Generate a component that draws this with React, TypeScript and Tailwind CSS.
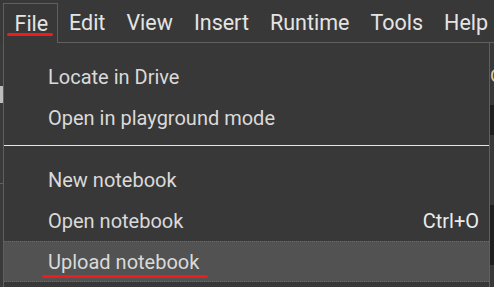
import React from "react";

const tabs = ["File", "Edit", "View", "Insert", "Runtime", "Tools", "Help"];

interface IMenuItem {
  label: string;
  shortcut?: string;
  active?: boolean;
}

const topItems: IMenuItem[] = [
  { label: "Locate in Drive" },
  { label: "Open in playground mode" },
];

const bottomItems: IMenuItem[] = [
  { label: "New notebook" },
  { label: "Open notebook", shortcut: "Ctrl+O" },
  { label: "Upload notebook", active: true },
];

const MenuRow: React.FC<IMenuItem> = ({ label, shortcut, active }) => (
  <div
    className={`relative flex h-[41px] items-center justify-between pl-[44px] pr-[10px] ${
      active
        ? "border-y border-dotted border-[#6a6a6a] bg-[#525252]"
        : "border-y border-transparent"
    }`}
  >
    <span className="text-[20px] text-[#dadada]">{label}</span>
    {shortcut && <span className="text-[20px] text-[#ececec]">{shortcut}</span>}
    {active && (
      <div className="absolute left-[38px] top-[33px] h-[3px] w-[166px] rounded-full bg-[#f01c1c]" />
    )}
  </div>
);

const App = () => {
  return (
    <div
      className="flex h-[287px] w-[494px] flex-col overflow-hidden bg-[#383838]"
      style={{ fontFamily: "Roboto, 'Liberation Sans', sans-serif" }}
    >
      {/* menu bar */}
      <div className="flex h-[43px] flex-none items-end overflow-hidden">
        <div className="w-[3px] flex-none self-stretch" />
        {tabs.map((t, i) =>
          i === 0 ? (
            <div
              key={t}
              className="relative flex h-[40px] flex-none items-center border-x border-t border-[#5f5f5f] pl-[10.5px] pr-[9px] pt-[1px]"
            >
              <span className="text-[21.5px] text-[#e4e4e4]">{t}</span>
              <div className="absolute left-[3px] top-[29px] h-[2.5px] w-[46px] rounded-full bg-[#f01c1c]" />
            </div>
          ) : (
            <div
              key={t}
              className="flex h-[40px] flex-none items-center border-b border-[#5f5f5f] pl-[10.75px] pr-[10.25px] pt-[1px]"
            >
              <span className="text-[21.5px] text-[#e4e4e4]">{t}</span>
            </div>
          )
        )}
      </div>

      <div className="flex flex-1">
        {/* left strip behind menu */}
        <div className="relative w-[3px] flex-none bg-[#3a3a3a]">
          <div className="absolute left-0 top-[43px] h-[17px] w-[3px] bg-[#bdbdbd]" />
          <div className="absolute left-0 top-[140px] h-px w-[3px] bg-[#5f5f5f]" />
        </div>

        {/* dropdown */}
        <div className="flex w-[487px] flex-none flex-col border-x border-[#5f5f5f] pt-[13px]">
          {topItems.map((it) => (
            <MenuRow key={it.label} {...it} />
          ))}
          <div className="mt-[7px] mb-[13px] h-px bg-[#e6e6e6]" />
          {bottomItems.map((it) => (
            <MenuRow key={it.label} {...it} />
          ))}
        </div>

        {/* right strip behind menu */}
        <div className="flex min-w-0 flex-1 flex-col overflow-hidden">
          <div className="h-[22px]" />
          <span className="h-[22px] text-[19px] leading-[22px] text-[#e0c8a0]">C</span>
          <div className="mt-[18px] h-[30px] bg-[#1f1f1f]" />
          <div className="mt-[70px] h-[60px] bg-[#1f1f1f]" />
        </div>
      </div>
    </div>
  );
};

export default App;
